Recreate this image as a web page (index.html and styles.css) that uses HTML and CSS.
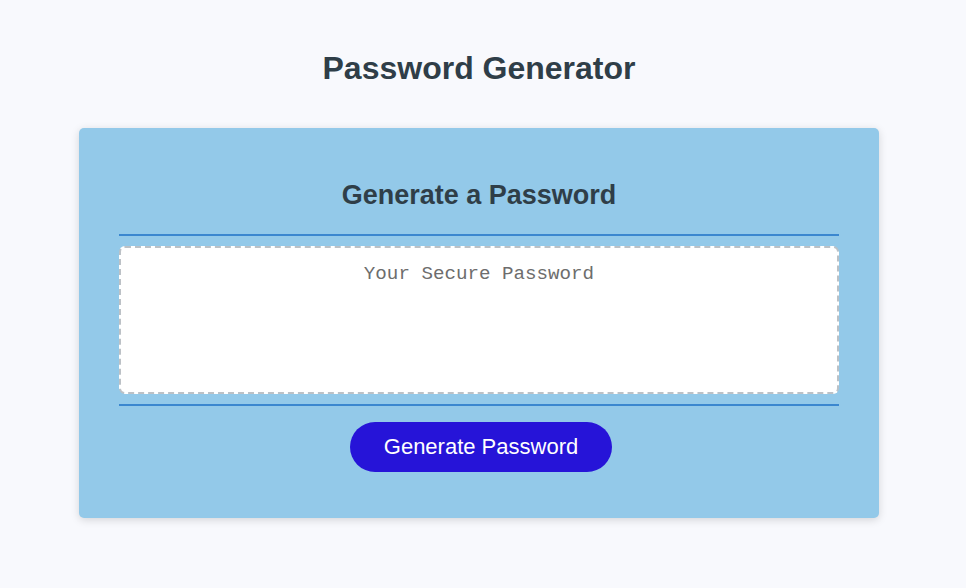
FILE: index.html
```html
<!DOCTYPE html>
<html lang="en">
<head>
<meta charset="UTF-8">
<title>Password Generator</title>
<link rel="stylesheet" href="styles.css">
</head>
<body>
<div class="wrapper">
  <header>
    <h1>Password Generator</h1>
  </header>
  <div class="card">
    <div class="card-header">
      <h2>Generate a Password</h2>
    </div>
    <div class="card-body">
      <textarea readonly id="password" placeholder="Your Secure Password" aria-label="Generated Password"></textarea>
    </div>
    <div class="card-footer">
      <button id="generate" class="btn">Generate Password</button>
    </div>
  </div>
</div>
</body>
</html>
```

FILE: styles.css
```css
*, *::before, *::after {
  box-sizing: border-box;
}

html, body, .wrapper {
  height: 100%;
  margin: 0;
  padding: 0;
  font-family: "Liberation Sans", Arial, sans-serif;
}

body {
  background-color: #f8f9fd;
}

.wrapper {
  padding-top: 30px;
  padding-left: 20px;
  padding-right: 28px;
}

header {
  text-align: center;
  padding: 0 20px 20px;
  color: #2f3e48;
}

header h1 {
  font-size: 32px;
  margin: 20px 0 21px;
  line-height: 37px;
}

.card {
  background-color: #93c9e9;
  border-radius: 5px;
  box-shadow: rgba(0, 0, 0, 0.15) 0 2px 8px 0;
  color: #2f3e48;
  font-size: 18px;
  margin: 0 auto;
  max-width: 800px;
  padding: 30px 40px;
}

.card-header h2 {
  text-align: center;
  font-size: 27px;
  line-height: 31px;
  margin: 22px 0 23px;
}

.card-header::after {
  content: " ";
  display: block;
  width: 100%;
  background: #3b87cf;
  height: 2px;
}

.card-body {
  min-height: 100px;
}

.card-footer {
  text-align: center;
}

.card-footer::before {
  content: " ";
  display: block;
  width: 100%;
  background: #3b87cf;
  height: 2px;
}

.btn {
  border: none;
  background-color: #2614d8;
  border-radius: 25px;
  color: #ffffff;
  display: inline-block;
  font-family: "Liberation Sans", Arial, sans-serif;
  font-size: 22px;
  line-height: 22px;
  margin: 16px 16px 16px 20px;
  padding: 14px 34px;
  text-align: center;
  cursor: pointer;
}

#password {
  appearance: none;
  display: block;
  width: 100%;
  height: 148px;
  padding: 15px 15px 85px;
  font-family: "Liberation Mono", "Courier New", monospace;
  font-size: 19.2px;
  text-align: center;
  margin: 10px 0;
  background: #ffffff;
  border: 2px dashed #bcc1c6;
  border-radius: 6px;
  resize: none;
  overflow: hidden;
  color: #333;
}

#password::placeholder {
  color: #6d6d6d;
  opacity: 1;
}
```
